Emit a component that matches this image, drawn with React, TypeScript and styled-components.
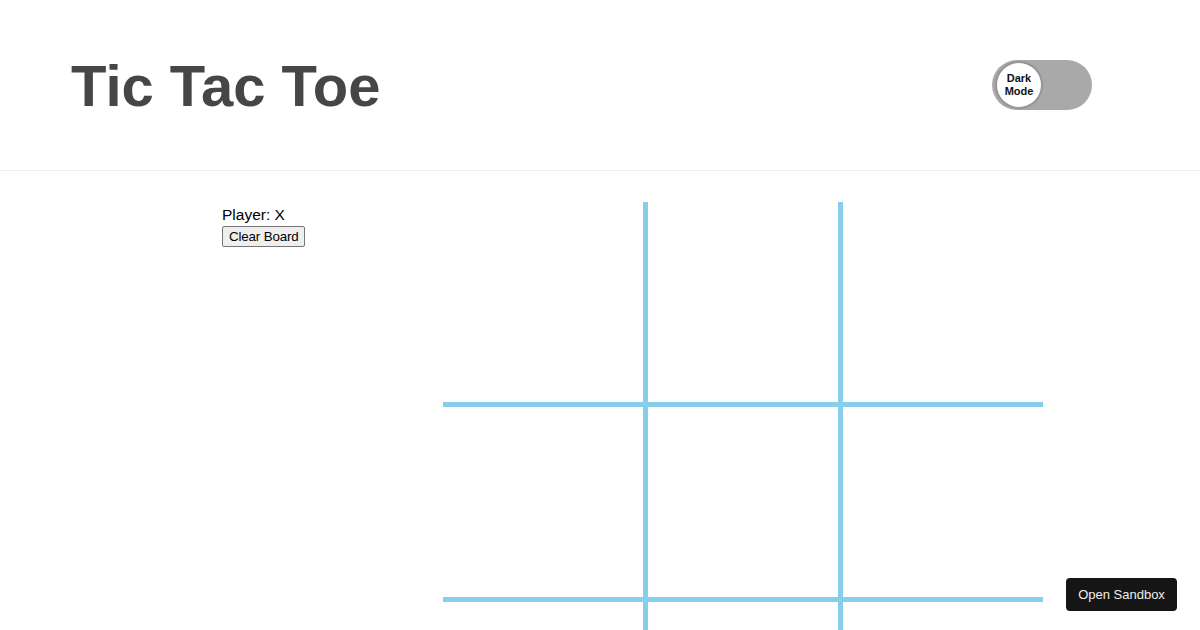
import { useState } from "react";
import styled, { createGlobalStyle } from "styled-components";

type Cell = "X" | "O" | null;

const GlobalStyle = createGlobalStyle`
  html, body {
    margin: 0;
    padding: 0;
    overflow: hidden;
    background: #fff;
    font-family: "Liberation Sans", Arial, sans-serif;
  }
`;

const Header = styled.header`
  display: flex;
  align-items: center;
  justify-content: space-between;
  height: 170px;
  padding: 0 108px 0 71px;
  border-bottom: 1px solid #ececec;
`;

const Title = styled.h1`
  margin: 0;
  font-size: 58px;
  font-weight: 700;
  color: #464646;
`;

const Toggle = styled.button<{ $on: boolean }>`
  display: flex;
  align-items: center;
  justify-content: ${(p) => (p.$on ? "flex-end" : "flex-start")};
  width: 100px;
  height: 50px;
  padding: 0 4px 0 5px;
  border: none;
  border-radius: 25px;
  background: ${(p) => (p.$on ? "#333" : "#a9a9a9")};
  cursor: pointer;
`;

const Knob = styled.span`
  display: flex;
  align-items: center;
  justify-content: center;
  width: 44px;
  height: 44px;
  border-radius: 50%;
  background: #fff;
  box-shadow: 0 0 1px 2px rgba(0, 0, 0, 0.12);
  font-family: "Liberation Sans", Arial, sans-serif;
  font-size: 11px;
  font-weight: 700;
  line-height: 13px;
  color: #111;
  text-align: center;
`;

const Main = styled.main`
  display: flex;
  align-items: flex-start;
  padding: 31px 0 0 222px;
`;

const Info = styled.div`
  display: flex;
  flex-direction: column;
  align-items: flex-start;
  width: 221px;
  padding-top: 4px;
  font-size: 15.5px;
  line-height: 18px;
  color: #000;
`;

const ClearButton = styled.button`
  margin-top: 2px;
  font-family: "Liberation Sans", Arial, sans-serif;
  font-size: 13.33px;
  letter-spacing: -0.15px;
  line-height: 15px;
  height: 21px;
  padding: 1px 6px;
  background: #efefef;
  border: 1px solid #767676;
  border-radius: 2px;
  color: #000;
`;

const Board = styled.div`
  display: grid;
  grid-template-columns: repeat(3, 200px);
  grid-template-rows: repeat(3, 200px);
`;

const Square = styled.button<{ $col: number; $row: number }>`
  box-sizing: border-box;
  border: none;
  background: transparent;
  font-family: "Liberation Sans", Arial, sans-serif;
  font-size: 96px;
  color: #444;
  cursor: pointer;
  border-left: ${(p) => (p.$col === 1 ? "5px solid #87ceeb" : "none")};
  border-right: ${(p) => (p.$col === 1 ? "5px solid #87ceeb" : "none")};
  border-top: ${(p) => (p.$row === 1 ? "5px solid #87ceeb" : "none")};
  border-bottom: ${(p) => (p.$row === 1 ? "5px solid #87ceeb" : "none")};
`;

const SandboxLink = styled.a`
  position: fixed;
  right: 23px;
  bottom: 19px;
  display: flex;
  align-items: center;
  justify-content: center;
  width: 111px;
  height: 33px;
  border-radius: 4px;
  background: #151515;
  color: #eee;
  font-size: 13px;
  text-decoration: none;
`;

function App() {
  const [dark, setDark] = useState(false);
  const [cells, setCells] = useState<Cell[]>(Array(9).fill(null));
  const [player, setPlayer] = useState<"X" | "O">("X");

  const play = (i: number) => {
    if (cells[i]) return;
    const next = [...cells];
    next[i] = player;
    setCells(next);
    setPlayer(player === "X" ? "O" : "X");
  };

  const clear = () => {
    setCells(Array(9).fill(null));
    setPlayer("X");
  };

  return (
    <>
      <GlobalStyle />
      <Header>
        <Title>Tic Tac Toe</Title>
        <Toggle $on={dark} onClick={() => setDark(!dark)}>
          <Knob>
            Dark
            <br />
            Mode
          </Knob>
        </Toggle>
      </Header>
      <Main>
        <Info>
          <div>Player: {player}</div>
          <ClearButton onClick={clear}>Clear Board</ClearButton>
        </Info>
        <Board>
          {cells.map((c, i) => (
            <Square
              key={i}
              $col={i % 3}
              $row={Math.floor(i / 3)}
              onClick={() => play(i)}
            >
              {c}
            </Square>
          ))}
        </Board>
      </Main>
      <SandboxLink href="#">Open Sandbox</SandboxLink>
    </>
  );
}

export default App;
